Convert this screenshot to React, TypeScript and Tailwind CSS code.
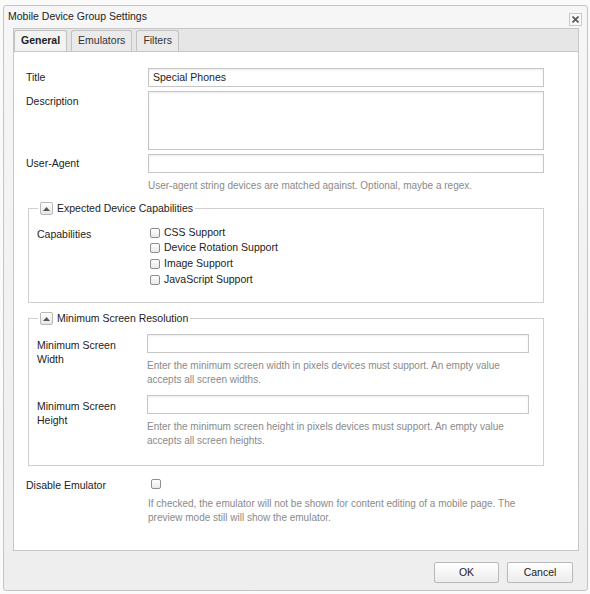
import { useState } from 'react';

const font = { fontFamily: '"Liberation Sans", Arial, sans-serif' };

function Help({ children }: { children: React.ReactNode }) {
  return <p className="text-[10px] leading-[14px] text-[#8a8a8a]">{children}</p>;
}

function TextInput({ value = '', className = '' }: { value?: string; className?: string }) {
  return (
    <div
      className={`h-[19px] border border-[#c6c6c6] bg-white shadow-[inset_0_1px_2px_rgba(0,0,0,0.08)] px-[4px] text-[10.5px] leading-[17px] text-[#222] ${className}`}
    >
      {value}
    </div>
  );
}

function Checkbox() {
  return <span className="inline-block w-[10px] h-[10px] border border-[#8e8e8e] rounded-[2px] bg-gradient-to-b from-white to-[#e9e9e9] shrink-0" />;
}

function Legend({ title }: { title: string }) {
  return (
    <legend className="ml-[1px] px-[2px] flex items-center gap-[4px] text-[10.5px] text-[#222]">
      <span className="w-[13px] h-[13px] border border-[#b8b8b8] rounded-[2px] bg-gradient-to-b from-white to-[#e6e6e6] flex items-center justify-center">
        <svg width="7" height="4" viewBox="0 0 7 4">
          <path d="M0 4 L3.5 0 L7 4 Z" fill="#555" />
        </svg>
      </span>
      {title}
    </legend>
  );
}

export default function App() {
  const [tab, setTab] = useState('General');
  const tabs = ['General', 'Emulators', 'Filters'];
  const caps = ['CSS Support', 'Device Rotation Support', 'Image Support', 'JavaScript Support'];

  return (
    <div className="w-[590px] h-[594px] bg-[#fafafa] pt-[5px] pl-[3px]" style={font}>
      {/* Window */}
      <div className="w-[585px] h-[586px] border border-[#c4c4c4] rounded-[3px] bg-gradient-to-b from-[#f6f6f6] to-[#eeeeee] flex flex-col">
        {/* Title bar */}
        <div className="h-[22px] flex items-center justify-between pl-[4px] pr-[5px]">
          <span className="text-[10.5px] text-[#222]">Mobile Device Group Settings</span>
          <span className="w-[13px] h-[13px] border border-[#c9c9c9] bg-[#f8f8f8] flex items-center justify-center mt-[4px]">
            <svg width="7" height="7" viewBox="0 0 7 7">
              <path d="M0.5 0.5 L6.5 6.5 M6.5 0.5 L0.5 6.5" stroke="#555" strokeWidth="1.6" />
            </svg>
          </span>
        </div>

        {/* Tab panel */}
        <div className="ml-[9px] w-[566px] h-[523px] border border-[#c6c6c6] flex flex-col">
          <div className="h-[23px] bg-[#e6e6e6] flex items-end gap-[4px] border-b border-[#c6c6c6]">
            {tabs.map((t) => (
              <button
                key={t}
                onClick={() => setTab(t)}
                className={`h-[21px] px-[6px] border border-b-0 border-[#c2c2c2] rounded-t-[3px] text-[10.5px] ${
                  tab === t ? 'bg-[#f3f3f3] font-bold text-[#222]' : 'bg-[#eaeaea] text-[#333]'
                }`}
              >
                {t}
              </button>
            ))}
          </div>

          <div className="flex-1 bg-white pt-[16px] pl-[12px] text-[10.5px] text-[#222]">
            {/* Title */}
            <div className="flex items-center">
              <label className="w-[122px] pt-[1px]">Title</label>
              <TextInput value="Special Phones" className="w-[396px]" />
            </div>
            {/* Description */}
            <div className="flex mt-[4px]">
              <label className="w-[122px] pt-[3px]">Description</label>
              <div className="w-[396px] h-[59px] border border-[#c6c6c6] shadow-[inset_0_1px_2px_rgba(0,0,0,0.08)]" />
            </div>
            {/* User-Agent */}
            <div className="flex items-center mt-[4px]">
              <label className="w-[122px]">User-Agent</label>
              <TextInput className="w-[396px]" />
            </div>
            <div className="pl-[122px] mt-[6px]">
              <Help>User-agent string devices are matched against. Optional, maybe a regex.</Help>
            </div>

            {/* Expected Device Capabilities */}
            <fieldset className="ml-[2px] mt-[8px] w-[516px] h-[102px] border border-[#cfcfcf] pl-[8px]">
              <Legend title="Expected Device Capabilities" />
              <div className="flex mt-[8px]">
                <label className="w-[113px] pt-[2px]">Capabilities</label>
                <div className="flex flex-col">
                  {caps.map((c) => (
                    <div key={c} className="flex items-center gap-[4px] h-[15.7px]">
                      <Checkbox />
                      <span>{c}</span>
                    </div>
                  ))}
                </div>
              </div>
            </fieldset>

            {/* Minimum Screen Resolution */}
            <fieldset className="ml-[2px] mt-[8px] w-[516px] h-[155px] border border-[#cfcfcf] pl-[8px]">
              <Legend title="Minimum Screen Resolution" />
              <div className="flex mt-[7px]">
                <label className="w-[110px] leading-[14px] pt-[4px]">
                  Minimum Screen
                  <br />
                  Width
                </label>
                <div className="flex flex-col">
                  <TextInput className="w-[382px]" />
                  <div className="mt-[6px]">
                    <Help>
                      Enter the minimum screen width in pixels devices must support. An empty value
                      <br />
                      accepts all screen widths.
                    </Help>
                  </div>
                </div>
              </div>
              <div className="flex mt-[8px]">
                <label className="w-[110px] leading-[14px] pt-[4px]">
                  Minimum Screen
                  <br />
                  Height
                </label>
                <div className="flex flex-col">
                  <TextInput className="w-[382px]" />
                  <div className="mt-[6px]">
                    <Help>
                      Enter the minimum screen height in pixels devices must support. An empty value
                      <br />
                      accepts all screen heights.
                    </Help>
                  </div>
                </div>
              </div>
            </fieldset>

            {/* Disable Emulator */}
            <div className="flex mt-[11px]">
              <label className="w-[125px] pt-[1px]">Disable Emulator</label>
              <div className="flex flex-col">
                <div className="pt-[1px]">
                  <Checkbox />
                </div>
                <div className="mt-[3px] -ml-[3px]">
                  <Help>
                    If checked, the emulator will not be shown for content editing of a mobile page. The
                    <br />
                    preview mode still will show the emulator.
                  </Help>
                </div>
              </div>
            </div>
          </div>
        </div>

        {/* Footer */}
        <div className="flex-1 flex justify-end items-start pt-[11px] pr-[14px] gap-[8px]">
          <button className="w-[65px] h-[21px] border border-[#b9b9b9] rounded-[2px] bg-gradient-to-b from-white to-[#ececec] text-[10.5px] text-[#222]">
            OK
          </button>
          <button className="w-[66px] h-[21px] border border-[#b9b9b9] rounded-[2px] bg-gradient-to-b from-white to-[#ececec] text-[10.5px] text-[#222]">
            Cancel
          </button>
        </div>
      </div>
    </div>
  );
}
